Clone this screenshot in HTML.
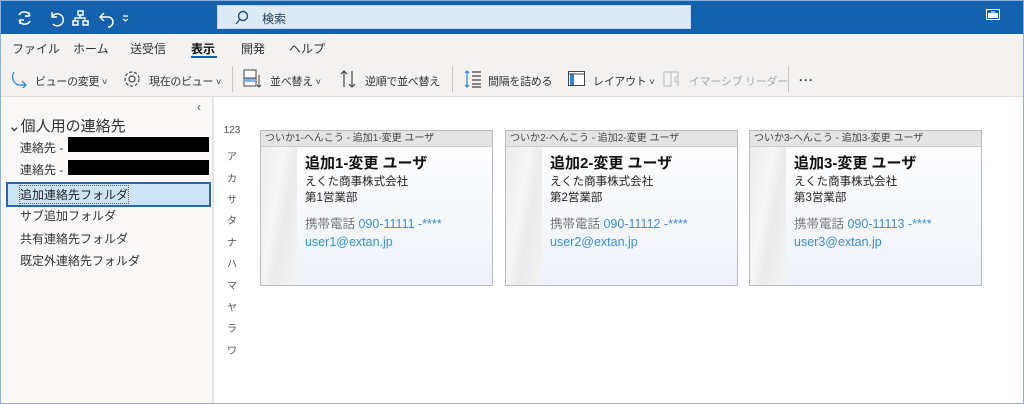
<!DOCTYPE html><html><head><meta charset="utf-8"><style>
*{margin:0;padding:0;box-sizing:border-box}
body{width:1024px;height:404px;overflow:hidden;background:#fff;font-family:"Liberation Sans","Noto Sans CJK JP",sans-serif;position:relative;color:#222}
.a{position:absolute;white-space:nowrap}
#frame{position:absolute;inset:0;border:1px solid #8fb0d8;pointer-events:none;z-index:9}
#title{left:0;top:0;width:1024px;height:34px;background:#1462ad}
#search{left:217px;top:5px;width:474px;height:24px;background:#dfeaf7;border:1px solid #c5d6ec}
#ribbon{left:0;top:34px;width:1024px;height:63px;background:#f3f2f1;border-bottom:1px solid #e1dfdd}
.tab{top:40px;font-size:12px;color:#333}
.tb{top:73px;font-size:11px;color:#333;letter-spacing:-0.3px}
.sep{top:66px;width:1px;height:26px;background:#c8c6c4}
#left{left:0;top:97px;width:214px;height:307px;background:#faf9f8;border-right:2px solid #e6e5e4}
.li{left:20px;font-size:12px;color:#333}
.idx{left:224px;font-size:10px;color:#555;width:16px;text-align:center}
.card{width:233px;height:156px;border:1px solid #b8bcc4;background:linear-gradient(#fff,#eef2f8)}
.card .h{height:16px;background:#e4e4e4;border-bottom:1px solid #cfcfcf;font-size:10px;color:#444;padding-left:4px;line-height:15px}
.card .s{position:absolute;left:0;top:16px;width:36px;bottom:0;background:linear-gradient(100deg,#ececec,#f6f6f6 40%,#ebebeb 60%,#f3f3f3)}
.card .n{position:absolute;left:44px;top:21px;font-size:15px;font-weight:bold;color:#111}
.card .c{position:absolute;left:44px;font-size:11.5px;color:#222}
.card .p{position:absolute;left:44px;top:86px;font-size:12.5px;color:#777;line-height:15px}
.card .p span,.card .e{color:#3a8fd8}
.card .e{position:absolute;left:44px;top:104px;font-size:12.5px;line-height:15px}
</style></head><body>
<div id="title" class="a"></div>
<svg class="a" style="left:14px;top:8px" width="140" height="20" fill="none" stroke="#fff" stroke-width="1.5">
<path d="M5 7a6 6 0 0 1 11 1M16 13a6 6 0 0 1-11-1M15 4v4h-4M6 16v-4h4"/>
<path d="M38 4v5h5M38 9a6 6 0 1 1 1 7"/>
<rect x="64" y="3" width="5" height="4"/><rect x="59" y="13" width="5" height="4"/><rect x="69" y="13" width="5" height="4"/><path d="M66 7v3M61 13v-3h10v3"/>
<path d="M90 5l-4 4 4 4M86 9h8a5 5 0 0 1 0 10"/>
<path d="M109 8h5M109 11l2.5 2 2.5-2" stroke-width="1.2"/>
</svg>
<div id="search" class="a"><svg class="a" style="left:16px;top:4px" width="16" height="16" fill="none" stroke="#1d4d86" stroke-width="1.4"><circle cx="9" cy="6" r="4.5"/><path d="M6 9l-4 5"/></svg><span class="a" style="left:44px;top:4px;font-size:12px;color:#1d3f66">検索</span></div>
<svg class="a" style="left:986px;top:9px" width="14" height="12"><rect x="0.5" y="0.5" width="13" height="10" fill="none" stroke="#fff"/><rect x="2" y="4" width="10" height="5" fill="#fff"/><path d="M5 3h4" stroke="#fff"/></svg>
<div id="ribbon" class="a"></div>
<span class="a tab" style="left:12px">ファイル</span>
<span class="a tab" style="left:73px">ホーム</span>
<span class="a tab" style="left:130px">送受信</span>
<span class="a tab" style="left:191px;color:#111;font-weight:bold">表示</span>
<div class="a" style="left:191px;top:56px;width:26px;height:2px;background:#1462ad"></div>
<span class="a tab" style="left:241px">開発</span>
<span class="a tab" style="left:289px">ヘルプ</span>
<svg class="a" style="left:11px;top:70px" width="18" height="18" fill="none" stroke="#2b88d8" stroke-width="1.3"><path d="M3 2a9 9 0 0 0 4 13h8M11 11l4 4-4 4"/></svg>
<span class="a tb" style="left:35px">ビューの変更 <small>˅</small></span>
<svg class="a" style="left:123px;top:70px" width="18" height="18" fill="none" stroke="#444" stroke-width="1.2"><circle cx="9" cy="9" r="3"/><circle cx="9" cy="9" r="7" stroke-dasharray="3 2"/></svg>
<span class="a tb" style="left:149px">現在のビュー <small>˅</small></span>
<div class="a sep" style="left:232px"></div>
<svg class="a" style="left:243px;top:69px" width="18" height="20"><rect x="1" y="1" width="12" height="16" fill="#fff" stroke="#444"/><rect x="2" y="9" width="10" height="4" fill="#7ab4e8"/><path d="M1 9h12M16 6v12M14 16l2 2 2-2" stroke="#444" fill="none"/></svg>
<span class="a tb" style="left:270px">並べ替え <small>˅</small></span>
<svg class="a" style="left:339px;top:69px" width="18" height="20" fill="none" stroke="#444" stroke-width="1.2"><path d="M5 18V2M2 5l3-3 3 3M13 2v16M10 15l3 3 3-3"/></svg>
<span class="a tb" style="left:365px">逆順で並べ替え</span>
<div class="a sep" style="left:452px"></div>
<svg class="a" style="left:463px;top:69px" width="20" height="20" fill="none" stroke-width="1.2"><path d="M4 2v16M2 4l2-2 2 2M2 16l2 2 2-2" stroke="#2b88d8"/><path d="M9 3h9M9 7h9M9 11h9M9 15h9M9 18h9" stroke="#444"/></svg>
<span class="a tb" style="left:488px">間隔を詰める</span>
<svg class="a" style="left:568px;top:71px" width="18" height="16"><rect x="0.5" y="0.5" width="16" height="14" fill="#fff" stroke="#444"/><rect x="2" y="3" width="4" height="11" fill="#2b88d8"/><path d="M0 3h17" stroke="#444"/></svg>
<span class="a tb" style="left:593px">レイアウト <small>˅</small></span>
<svg class="a" style="left:663px;top:70px" width="20" height="18" fill="none" stroke="#bbb"><path d="M1 2h7v14H1zM8 2h7v14"/><path d="M12 8l3-2v7l-3-2z"/></svg>
<span class="a tb" style="left:689px;color:#aaa">イマーシブ リーダー</span>
<div class="a sep" style="left:788px"></div>
<span class="a tb" style="left:799px;font-weight:bold;letter-spacing:1px;font-size:12px">···</span>
<div id="left" class="a"></div>
<span class="a" style="left:197px;top:100px;font-size:12px;color:#555">‹</span>
<span class="a" style="left:8px;top:115px;font-size:15px;color:#333">⌄個人用の連絡先</span>
<span class="a li" style="top:139px">連絡先 -</span>
<div class="a" style="left:68px;top:137px;width:141px;height:15px;background:#000"></div>
<span class="a li" style="top:161px">連絡先 -</span>
<div class="a" style="left:68px;top:160px;width:141px;height:15px;background:#000"></div>
<div class="a" style="left:6px;top:182px;width:205px;height:25px;background:#cde4f7;border:2px solid #1f6bb3"></div>
<span class="a li" style="top:186px;color:#222;outline:1px dotted #666">追加連絡先フォルダ</span>
<span class="a li" style="top:207px">サブ追加フォルダ</span>
<span class="a li" style="top:230px">共有連絡先フォルダ</span>
<span class="a li" style="top:252px">既定外連絡先フォルダ</span>
<span class="a idx" style="top:125px;left:222px;width:20px">123</span>
<span class="a idx" style="top:148px">ア</span><span class="a idx" style="top:170px">カ</span><span class="a idx" style="top:191px">サ</span><span class="a idx" style="top:212px">タ</span><span class="a idx" style="top:234px">ナ</span><span class="a idx" style="top:255px">ハ</span><span class="a idx" style="top:277px">マ</span><span class="a idx" style="top:299px">ヤ</span><span class="a idx" style="top:320px">ラ</span><span class="a idx" style="top:342px">ワ</span>

<div class="a card" style="left:260px;top:130px"><div class="h">ついか1-へんこう - 追加1-変更 ユーザ</div><div class="s"></div><div class="n">追加1-変更 ユーザ</div><div class="c" style="top:42px">えくた商事株式会社</div><div class="c" style="top:58px">第1営業部</div><div class="p">携帯電話 <span>090-11111 -****</span></div><div class="e">user1@extan.jp</div></div>
<div class="a card" style="left:505px;top:130px"><div class="h">ついか2-へんこう - 追加2-変更 ユーザ</div><div class="s"></div><div class="n">追加2-変更 ユーザ</div><div class="c" style="top:42px">えくた商事株式会社</div><div class="c" style="top:58px">第2営業部</div><div class="p">携帯電話 <span>090-11112 -****</span></div><div class="e">user2@extan.jp</div></div>
<div class="a card" style="left:749px;top:130px"><div class="h">ついか3-へんこう - 追加3-変更 ユーザ</div><div class="s"></div><div class="n">追加3-変更 ユーザ</div><div class="c" style="top:42px">えくた商事株式会社</div><div class="c" style="top:58px">第3営業部</div><div class="p">携帯電話 <span>090-11113 -****</span></div><div class="e">user3@extan.jp</div></div>
<div id="frame"></div>
</body></html>
